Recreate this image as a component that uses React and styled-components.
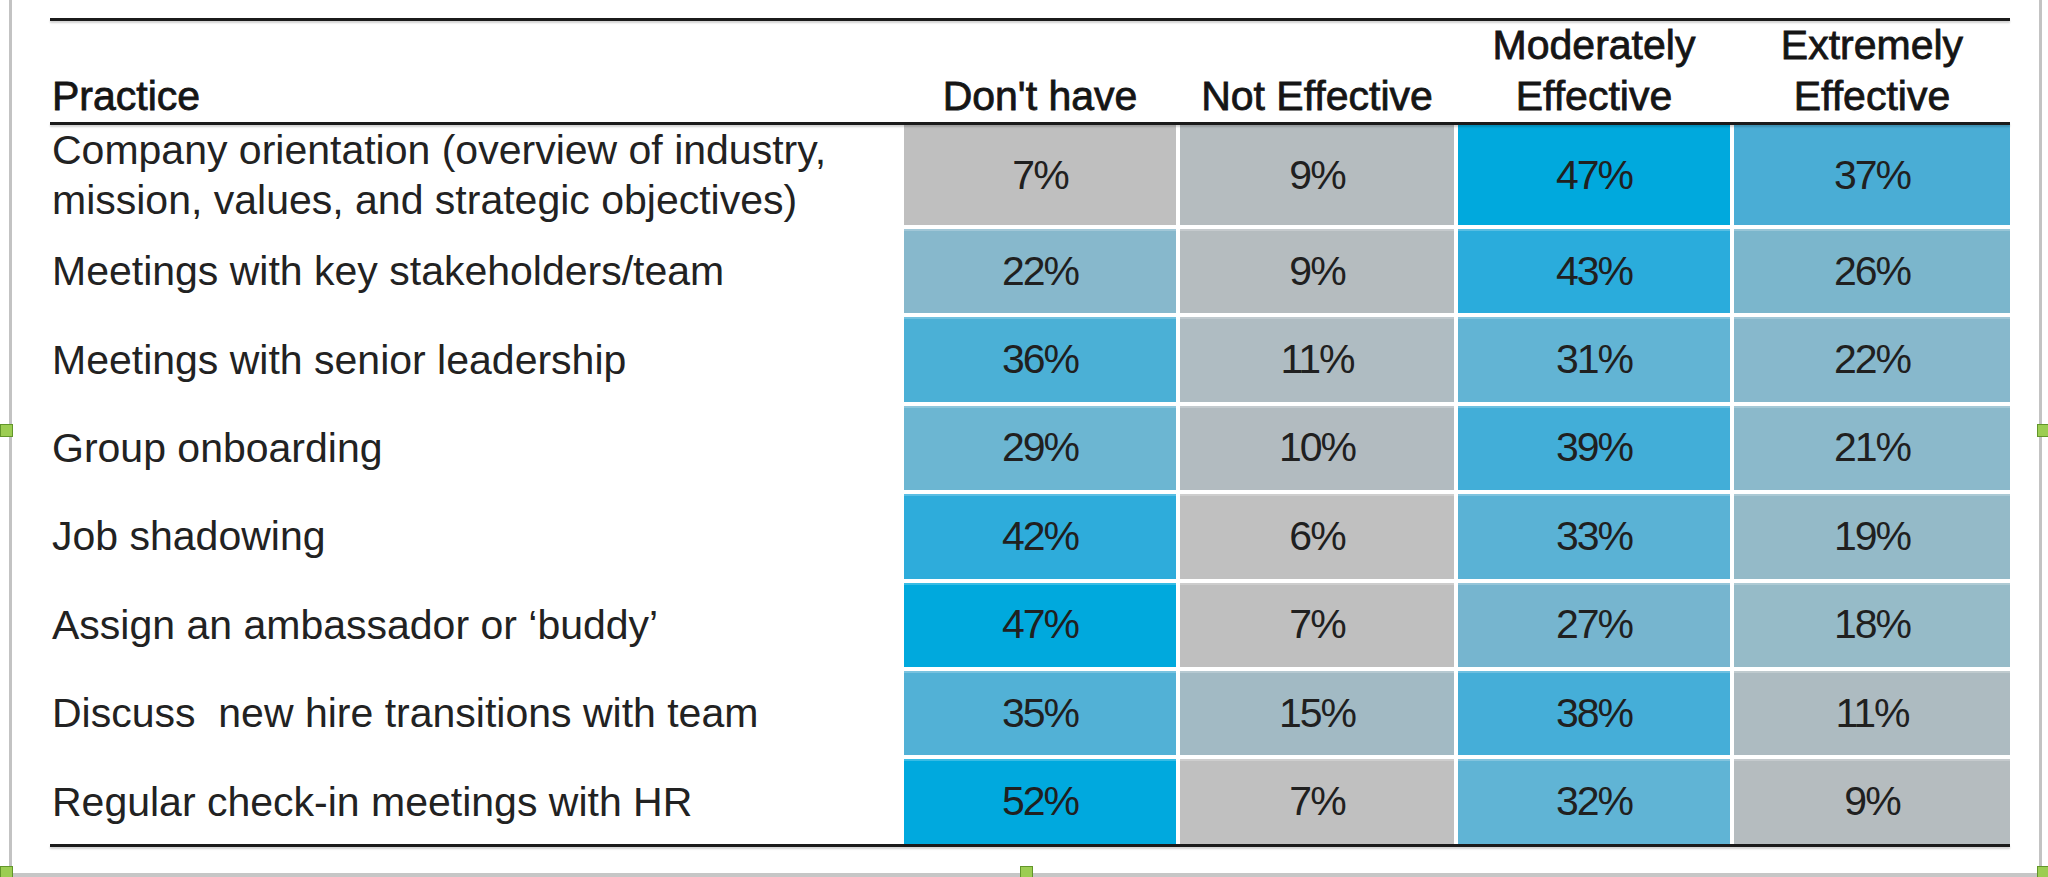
import React from "react";
import styled, { createGlobalStyle } from "styled-components";

const GlobalStyle = createGlobalStyle`
  html, body {
    margin: 0;
    padding: 0;
    background: #ffffff;
    overflow: hidden;
  }
  body {
    font-family: "Liberation Sans", Arial, sans-serif;
    color: #1c1c1c;
  }
`;

const Frame = styled.div`
  position: relative;
  box-sizing: border-box;
  margin-left: 9px;
  width: 2033px;
  height: 877px;
  border-left: 3px solid #c3c3c3;
  border-right: 3px solid #c3c3c3;
  border-bottom: 4px solid #c6c6c6;
  padding: 18px 0 0 38px;
`;

const Sheet = styled.div`
  display: grid;
  width: 1960px;
  grid-template-columns: 854px 276px 278px 276px 276px;
  grid-template-rows: 3px 101px 3px 100px repeat(7, 88.4px) 3px;
  font-size: 41px;
`;

const Rule = styled.div`
  grid-column: 1 / -1;
  background: #1b1b1b;
  box-shadow: 0 2px 2px rgba(0, 0, 0, 0.18);
  position: relative;
  z-index: 1;
`;

const HeadCell = styled.div`
  display: flex;
  align-items: flex-end;
  justify-content: ${(p) => (p.$left ? "flex-start" : "center")};
  text-align: ${(p) => (p.$left ? "left" : "center")};
  padding-left: ${(p) => (p.$left ? "2px" : "0")};
  padding-right: ${(p) => (p.$gap ? "4px" : "0")};
  font-weight: 400;
  -webkit-text-stroke: 0.8px #151515;
  white-space: pre;
  line-height: 51px;
  color: #151515;
`;

const Label = styled.div`
  display: flex;
  align-items: center;
  padding-left: 2px;
  border-top: ${(p) => (p.$first ? "0" : "4px solid #ffffff")};
  line-height: 50px;
  white-space: pre;
  color: #222222;
`;

const Cell = styled.div`
  display: flex;
  align-items: center;
  justify-content: center;
  background: ${(p) => p.$bg};
  border-top: ${(p) => (p.$first ? "0" : "4px solid #ffffff")};
  border-right: ${(p) => (p.$last ? "0" : "4px solid #ffffff")};
  box-shadow: ${(p) =>
    p.$first ? "none" : "inset 0 2px 0 rgba(255, 255, 255, 0.22)"};
  letter-spacing: -2px;
  color: #202020;
`;

const Handle = styled.span`
  position: absolute;
  width: 13px;
  height: 13px;
  box-sizing: border-box;
  background: #9ccd52;
  border: 1px solid #62962a;
  left: ${(p) => p.$x}px;
  top: ${(p) => p.$y}px;
`;

const headers = ["Don't have", "Not Effective", "Moderately\nEffective", "Extremely\nEffective"];

const rows = [
  {
    label: "Company orientation (overview of industry,\nmission, values, and strategic objectives)",
    cells: [["7%", "#bfbfbf"], ["9%", "#b5bcbf"], ["47%", "#00a9dd"], ["37%", "#4aadd5"]],
  },
  {
    label: "Meetings with key stakeholders/team",
    cells: [["22%", "#87b8cc"], ["9%", "#b5bcbf"], ["43%", "#2aacdc"], ["26%", "#7bb6cc"]],
  },
  {
    label: "Meetings with senior leadership",
    cells: [["36%", "#4bb0d6"], ["11%", "#afbcc2"], ["31%", "#62b4d4"], ["22%", "#87b8cc"]],
  },
  {
    label: "Group onboarding",
    cells: [["29%", "#6cb6d2"], ["10%", "#b2bbc0"], ["39%", "#42aed8"], ["21%", "#8bb9cb"]],
  },
  {
    label: "Job shadowing",
    cells: [["42%", "#2eacdb"], ["6%", "#c0c0c0"], ["33%", "#5ab2d5"], ["19%", "#94bac8"]],
  },
  {
    label: "Assign an ambassador or \u2018buddy\u2019",
    cells: [["47%", "#00a9dd"], ["7%", "#bfbfbf"], ["27%", "#76b5cf"], ["18%", "#96bbc8"]],
  },
  {
    label: "Discuss  new hire transitions with team",
    cells: [["35%", "#52b1d6"], ["15%", "#a2bac4"], ["38%", "#45aed8"], ["11%", "#adbbc1"]],
  },
  {
    label: "Regular check-in meetings with HR",
    cells: [["52%", "#00a9de"], ["7%", "#c0c0c0"], ["32%", "#60b4d5"], ["9%", "#b5bcbf"]],
  },
];

export default function App() {
  return (
    <>
      <GlobalStyle />
      <Frame>
        <Sheet>
          <Rule />
          <HeadCell $left>Practice</HeadCell>
          {headers.map((h, i) => (
            <HeadCell key={h} $gap={i < 3}>
              {h}
            </HeadCell>
          ))}
          <Rule />
          {rows.map((row, r) => (
            <React.Fragment key={row.label}>
              <Label $first={r === 0}>{row.label}</Label>
              {row.cells.map(([value, bg], c) => (
                <Cell key={c} $bg={bg} $first={r === 0} $last={c === 3}>
                  {value}
                </Cell>
              ))}
            </React.Fragment>
          ))}
          <Rule />
        </Sheet>
        <Handle $x={-12} $y={424} />
        <Handle $x={2025} $y={424} />
        <Handle $x={-12} $y={866} />
        <Handle $x={1008} $y={866} />
        <Handle $x={2025} $y={866} />
      </Frame>
    </>
  );
}
